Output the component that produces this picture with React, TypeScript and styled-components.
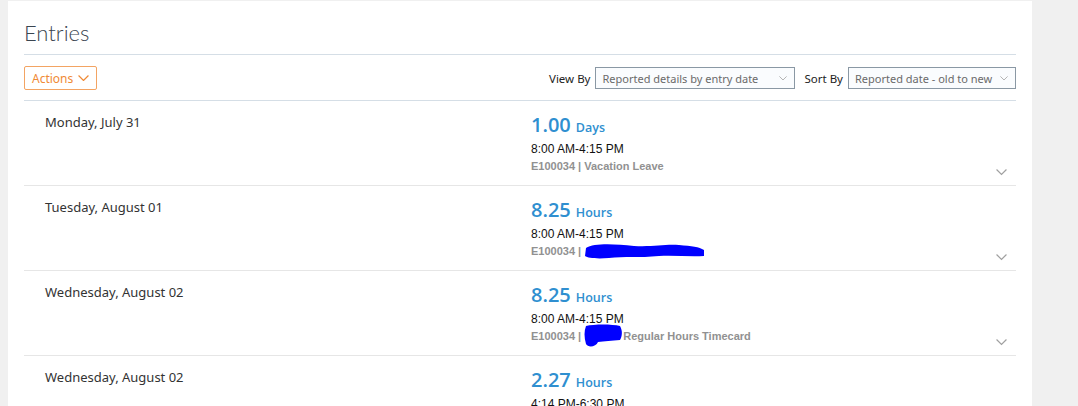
import React from "react";
import styled, { createGlobalStyle } from "styled-components";

const GlobalStyle = createGlobalStyle`
  html, body {
    margin: 0;
    padding: 0;
    background: #f0f0f0;
  }
  body {
    font-family: "Noto Sans", "Open Sans", sans-serif;
    overflow: hidden;
  }
`;

const Card = styled.div`
  margin: 1px 0 0 8px;
  width: 1024px;
  min-height: 420px;
  background: #fff;
  padding: 0 16px;
  box-sizing: border-box;
`;

const Header = styled.div`
  height: 54px;
  border-bottom: 1px solid #d5dee6;
  display: flex;
  align-items: flex-end;
  padding-bottom: 10px;
  box-sizing: border-box;
`;

const Title = styled.h1`
  margin: 0;
  font-family: "Lato", "Open Sans", sans-serif;
  font-weight: 300;
  font-size: 22px;
  color: #3a4550;
  line-height: 1;
`;

const Toolbar = styled.div`
  height: 46px;
  border-bottom: 1px solid #d5dee6;
  display: flex;
  align-items: center;
  justify-content: space-between;
  box-sizing: border-box;
  padding-top: 1px;
`;

const ActionsButton = styled.button`
  height: 24px;
  width: 73px;
  border: 1px solid #f3a463;
  border-radius: 2px;
  background: #fff;
  color: #f08a35;
  font-family: "Noto Sans", sans-serif;
  font-size: 12px;
  display: flex;
  align-items: center;
  gap: 5px;
  padding: 0 0 0 7px;
`;

const Filters = styled.div`
  display: flex;
  align-items: center;
`;

const FilterLabel = styled.span<{ first?: boolean }>`
  font-size: 11.5px;
  color: #222;
  white-space: nowrap;
  margin: 0 5px 0 ${(p) => (p.first ? "0" : "9px")};
`;

const Select = styled.div<{ w: number }>`
  width: ${(p) => p.w}px;
  height: 22px;
  box-sizing: border-box;
  border: 1px solid #8a98a4;
  background: #fafcfe;
  display: flex;
  align-items: center;
  justify-content: space-between;
  padding: 0 7px 0 6px;
  font-size: 11px;
  color: #6a6a6a;
  white-space: nowrap;
`;

const Row = styled.div`
  height: 85px;
  box-sizing: border-box;
  border-bottom: 1px solid #e6e6e6;
  display: grid;
  grid-template-columns: 507px 1fr 20px;
`;

const DateText = styled.div`
  padding: 12px 0 0 21px;
  font-size: 13px;
  color: #333;
`;

const Detail = styled.div`
  padding-top: 10px;
  font-family: "Liberation Sans", Arial, sans-serif;
`;

const Amount = styled.div`
  display: flex;
  align-items: baseline;
  gap: 5px;
  color: #2f8fd0;
  height: 26px;
`;

const Big = styled.span`
  font-family: "Open Sans", "Noto Sans", sans-serif;
  font-size: 20px;
  font-weight: 600;
`;

const Unit = styled.span`
  font-family: "Open Sans", "Noto Sans", sans-serif;
  font-size: 12.5px;
  font-weight: 600;
`;

const Time = styled.div`
  margin-top: 5px;
  font-size: 12px;
  color: #111;
  line-height: 14px;
`;

const Code = styled.div`
  margin-top: 3px;
  font-size: 11px;
  font-weight: bold;
  color: #919191;
  line-height: 14px;
  display: flex;
  align-items: center;
  white-space: pre;
`;

const Redact = styled.svg`
  margin: 0 -2px 0 3px;
  overflow: visible;
`;

const ChevronCell = styled.div`
  display: flex;
  align-items: flex-end;
  padding-bottom: 9px;
  color: #999;
`;

const Chevron = ({ size = 10, color = "currentColor" }: { size?: number; color?: string }) => (
  <svg width={size} height={size * 0.6} viewBox="0 0 10 6" fill="none">
    <path d="M0.5 0.5 L5 5 L9.5 0.5" stroke={color} strokeWidth="1.1" />
  </svg>
);

type Entry = {
  date: string;
  amount: string;
  unit: string;
  time: string;
  code: React.ReactNode;
};

const entries: Entry[] = [
  {
    date: "Monday, July 31",
    amount: "1.00",
    unit: "Days",
    time: "8:00 AM-4:15 PM",
    code: "E100034 | Vacation Leave",
  },
  {
    date: "Tuesday, August 01",
    amount: "8.25",
    unit: "Hours",
    time: "8:00 AM-4:15 PM",
    code: (
      <>
        {"E100034 |"}
        <Redact width="120" height="14" viewBox="0 0 120 14">
          <path
            d="M2 4 C10 -1 30 0 50 2 C70 3 80 0 95 1 C108 2 115 3 120 6 L120 12 C105 13 90 11 75 12 C55 14 40 12 25 14 C12 15 4 14 1 12 Z"
            fill="#0000ff"
          />
        </Redact>
      </>
    ),
  },
  {
    date: "Wednesday, August 02",
    amount: "8.25",
    unit: "Hours",
    time: "8:00 AM-4:15 PM",
    code: (
      <>
        {"E100034 |"}
        <Redact width="38" height="14" viewBox="0 0 38 14">
          <path
            d="M2 -3 C10 -5 28 -5 36 -3 C39 2 38 8 36 11 C28 12 20 12 14 13 C12 18 4 19 2 15 C0 8 0 2 2 -3 Z"
            fill="#0000ff"
          />
        </Redact>
        {" Regular Hours Timecard"}
      </>
    ),
  },
  {
    date: "Wednesday, August 02",
    amount: "2.27",
    unit: "Hours",
    time: "4:14 PM-6:30 PM",
    code: "E100034 | Regular Hours Timecard",
  },
];

export default function App() {
  return (
    <>
      <GlobalStyle />
      <Card>
        <Header>
          <Title>Entries</Title>
        </Header>
        <Toolbar>
          <ActionsButton>
            Actions <Chevron size={11} color="#f08a35" />
          </ActionsButton>
          <Filters>
            <FilterLabel first>View By</FilterLabel>
            <Select w={200}>
              Reported details by entry date <Chevron size={8} color="#aaa" />
            </Select>
            <FilterLabel>Sort By</FilterLabel>
            <Select w={168}>
              Reported date - old to new <Chevron size={8} color="#aaa" />
            </Select>
          </Filters>
        </Toolbar>
        {entries.map((e, i) => (
          <Row key={i}>
            <DateText>{e.date}</DateText>
            <Detail>
              <Amount>
                <Big>{e.amount}</Big>
                <Unit>{e.unit}</Unit>
              </Amount>
              <Time>{e.time}</Time>
              <Code>{e.code}</Code>
            </Detail>
            <ChevronCell>
              <Chevron size={11} color="#a0a0a0" />
            </ChevronCell>
          </Row>
        ))}
      </Card>
    </>
  );
}
